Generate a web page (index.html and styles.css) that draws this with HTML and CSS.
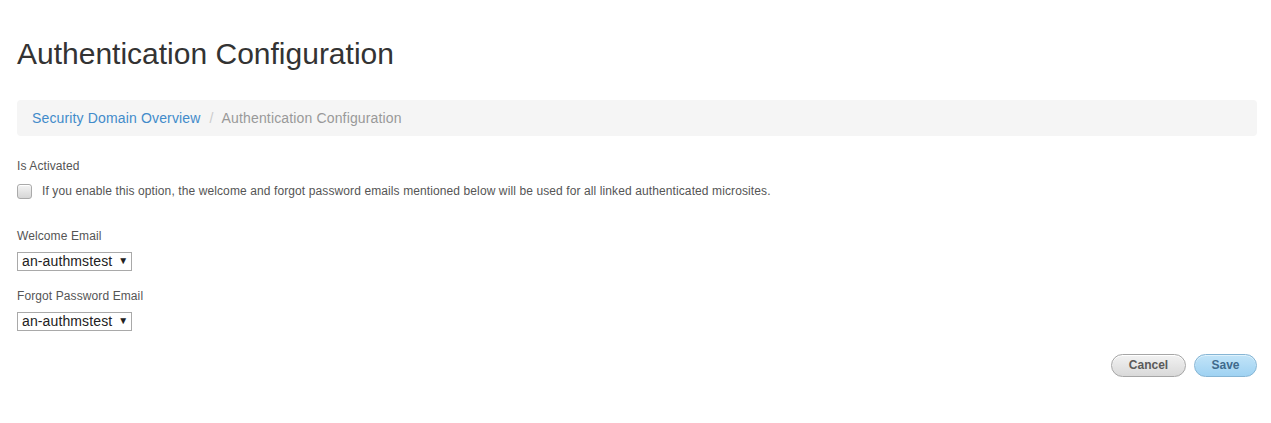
FILE: index.html
```html
<!DOCTYPE html>
<html lang="en">
<head>
<meta charset="utf-8">
<title>Authentication Configuration</title>
<link rel="stylesheet" href="styles.css">
</head>
<body>
<div class="page">
  <h1 class="title">Authentication Configuration</h1>
  <ol class="breadcrumb">
    <li><a href="#" class="crumb-link">Security Domain Overview</a></li>
    <li class="sep">/</li>
    <li class="crumb-active">Authentication Configuration</li>
  </ol>

  <div class="group first">
    <div class="label">Is Activated</div>
    <label class="check-row">
      <input type="checkbox" class="checkbox">
      <span class="check-text">If you enable this option, the welcome and forgot password emails mentioned below will be used for all linked authenticated microsites.</span>
    </label>
  </div>

  <div class="group gap-lg">
    <div class="label">Welcome Email</div>
    <div class="select"><span class="select-text">an-authmstest</span><span class="arrow">▼</span></div>
  </div>

  <div class="group">
    <div class="label">Forgot Password Email</div>
    <div class="select"><span class="select-text">an-authmstest</span><span class="arrow">▼</span></div>
  </div>

  <div class="actions">
    <button class="btn btn-cancel">Cancel</button>
    <button class="btn btn-save">Save</button>
  </div>
</div>
</body>
</html>
```

FILE: styles.css
```css
* { box-sizing: border-box; }
html, body { margin: 0; padding: 0; background: #fff; }
body {
  font-family: "Liberation Sans", Arial, Helvetica, sans-serif;
  color: #333;
}
.page {
  padding: 0 14px 0 17px;
}
.title {
  margin: 37px 0 30px;
  font-size: 30px;
  line-height: 33px;
  font-weight: normal;
  color: #333;
}
.breadcrumb {
  list-style: none;
  margin: 0;
  padding: 8px 15px;
  height: 36px;
  background: #f5f5f5;
  border-radius: 4px;
  display: flex;
  font-size: 14px;
  line-height: 20px;
  letter-spacing: 0.15px;
}
.breadcrumb li { display: block; }
.crumb-link { color: #428bca; text-decoration: none; }
.sep { color: #ccc; padding: 0 8px 0 9px; }
.crumb-active { color: #999; }

.group { margin-top: 17px; }
.group.first { margin-top: 22px; }
.group.gap-lg { margin-top: 28px; }
.label {
  font-size: 12px;
  line-height: 17px;
  color: #555;
  letter-spacing: 0.1px;
}
.check-row {
  display: flex;
  align-items: flex-start;
  margin-top: 8px;
  cursor: pointer;
}
.checkbox {
  appearance: none;
  -webkit-appearance: none;
  margin: 1px 10px 0 0;
  width: 15px;
  height: 15px;
  border: 1px solid #aaa;
  border-radius: 3px;
  background: linear-gradient(#f4f4f4, #d6d6d6);
  box-shadow: inset 0 1px 0 #fff;
  flex: none;
}
.check-text {
  font-size: 12px;
  line-height: 17px;
  color: #555;
  letter-spacing: 0.105px;
}
.select {
  margin-top: 7px;
  width: 115px;
  height: 19px;
  border: 1px solid #a9a9a9;
  display: flex;
  align-items: flex-start;
  padding: 0 0 0 4px;
  font-size: 14px;
  line-height: 16px;
  color: #222;
  background: #fff;
  letter-spacing: 0.12px;
}
.arrow {
  font-size: 10px;
  line-height: 16px;
  margin-left: 6px;
  color: #222;
}
.actions {
  display: flex;
  justify-content: flex-end;
  gap: 8px;
  margin-top: 23px;
}
.btn {
  height: 23px;
  border-radius: 12px;
  font-family: "Liberation Sans", Arial, sans-serif;
  font-weight: bold;
  font-size: 12px;
  line-height: 21px;
  padding: 0;
  cursor: pointer;
}
.btn-cancel {
  width: 75px;
  color: #5a5a5a;
  border: 1px solid #a6a6a6;
  background: linear-gradient(#f2f2f2, #d9d9d9);
  box-shadow: inset 0 1px 0 #fff;
}
.btn-save {
  width: 63px;
  color: #3f6a8c;
  border: 1px solid #86b5d4;
  background: linear-gradient(#c2e4f8, #9fd2f2);
  box-shadow: inset 0 1px 0 #dff2fc;
}
```
